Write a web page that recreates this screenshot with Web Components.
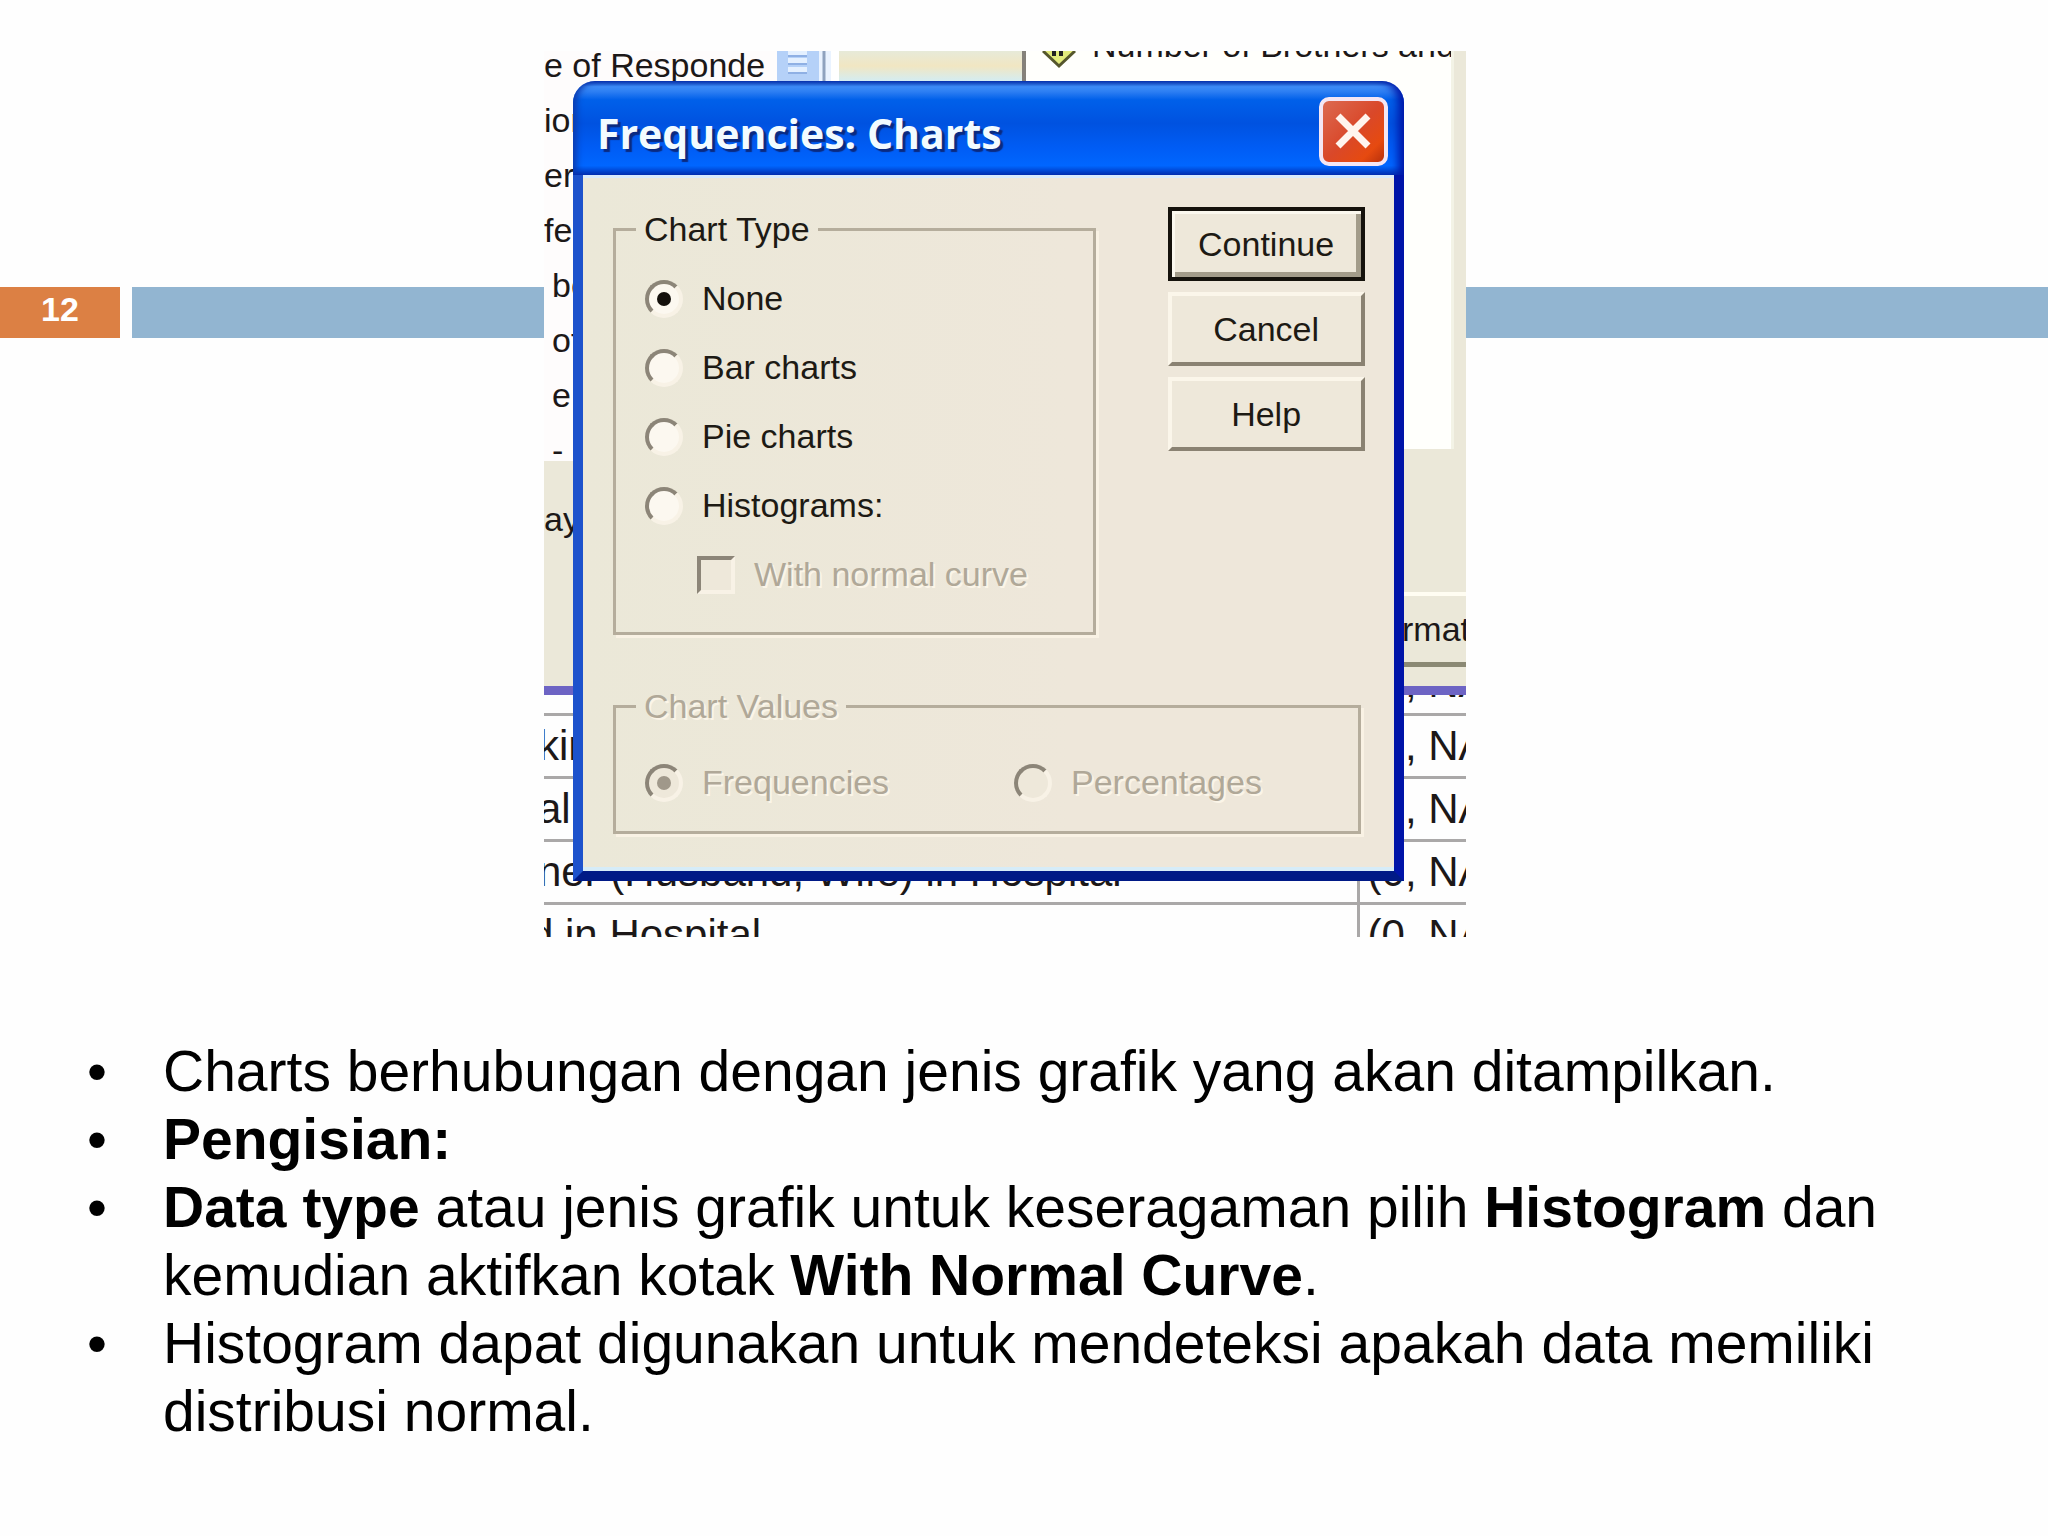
<!DOCTYPE html>
<html lang="id">
<head>
<meta charset="utf-8">
<title>Frequencies: Charts</title>
<style>
    body {
        margin: 0;
        background: #fefefe;
        color: #000;
        font-family: "Liberation Sans", Arial, sans-serif;
    }
</style>
</head>
<body>
<slide-page number="12">
    <slide-figure slot="figure">
        <backdrop-window slot="backdrop"></backdrop-window>
        <xp-dialog heading="Frequencies: Charts">
            <xp-group heading="Chart Type">
                <xp-option name="type" checked>None</xp-option>
                <xp-option name="type">Bar charts</xp-option>
                <xp-option name="type">Pie charts</xp-option>
                <xp-option name="type">Histograms:</xp-option>
                <xp-option type="checkbox" name="curve" nested disabled>With normal curve</xp-option>
            </xp-group>
            <xp-button slot="actions" default>Continue</xp-button>
            <xp-button slot="actions">Cancel</xp-button>
            <xp-button slot="actions">Help</xp-button>
            <xp-group slot="footer" heading="Chart Values" row disabled>
                <xp-option name="values" checked disabled>Frequencies</xp-option>
                <xp-option name="values" disabled>Percentages</xp-option>
            </xp-group>
        </xp-dialog>
    </slide-figure>
    <slide-point>Charts berhubungan dengan jenis grafik yang akan ditampilkan.</slide-point>
    <slide-point><b>Pengisian:</b></slide-point>
    <slide-point><b>Data type</b> atau jenis grafik untuk keseragaman pilih <b>Histogram</b> dan kemudian aktifkan kotak <b>With Normal Curve</b>.</slide-point>
    <slide-point>Histogram dapat digunakan untuk mendeteksi apakah data memiliki distribusi normal.</slide-point>
</slide-page>

<script>
class SlidePage extends HTMLElement {
    constructor() {
        super();
        this.attachShadow({ mode: 'open' });
        this.shadowRoot.innerHTML = `
            <style>
                :host {
                    display: block;
                }
                .stage {
                    display: grid;
                    grid-template-columns: 120px 1fr;
                    grid-template-rows: 287px 51px auto;
                    column-gap: 12px;
                }
                .number {
                    grid-area: 2 / 1;
                    background: #dc8044;
                    color: #fff;
                    font-size: 34px;
                    font-weight: bold;
                    line-height: 44px;
                    text-align: center;
                }
                .bar {
                    grid-area: 2 / 2;
                    background: #92b5d1;
                }
                ::slotted(slide-figure) {
                    grid-area: 1 / 1 / 4 / 3;
                    width: 45%;
                    margin: 51px 0 0 544px;
                }
                .points {
                    padding: 100px 80px 48px 87px;
                }
            </style>
            <div class="stage">
                <div class="number"></div>
                <div class="bar"></div>
                <slot name="figure"></slot>
            </div>
            <div class="points" role="list"><slot></slot></div>
        `;
    }
    connectedCallback() {
        this.shadowRoot.querySelector('.number').textContent = this.getAttribute('number');
    }
}

class SlidePoint extends HTMLElement {
    constructor() {
        super();
        this.attachShadow({ mode: 'open' });
        this.shadowRoot.innerHTML = `
            <style>
                :host {
                    display: grid;
                    grid-template-columns: 76px 1fr;
                    font-size: 57px;
                    line-height: 68px;
                }
            </style>
            <span>•</span>
            <div><slot></slot></div>
        `;
    }
    connectedCallback() {
        this.setAttribute('role', 'listitem');
    }
}

class SlideFigure extends HTMLElement {
    constructor() {
        super();
        this.attachShadow({ mode: 'open' });
        this.shadowRoot.innerHTML = `
            <style>
                :host {
                    display: grid;
                    grid-template-columns: minmax(0, 1fr);
                    overflow: hidden;
                }
                ::slotted(*) {
                    grid-area: 1 / 1;
                }
                ::slotted(xp-dialog) {
                    margin: 30px 62px 56px 29px;
                }
            </style>
            <slot name="backdrop"></slot>
            <slot></slot>
        `;
    }
}

// The window that shows behind the dialog, cut off at the figure's edges
class BackdropWindow extends HTMLElement {
    constructor() {
        super();
        this.attachShadow({ mode: 'open' });
        this.shadowRoot.innerHTML = `
            <style>
                :host {
                    display: flex;
                    flex-direction: column;
                    height: 0;
                    min-height: 100%;
                    overflow: hidden;
                    background: #fefefe;
                    color: #1c1818;
                    font-size: 34px;
                    white-space: nowrap;
                }
                .pane {
                    display: flex;
                    flex: none;
                    height: 635px;
                    background: #ebe8d9;
                }
                .pane svg {
                    flex: none;
                }
                .left {
                    flex: none;
                    width: 233px;
                }
                .names {
                    height: 410px;
                    overflow: hidden;
                    background: #fefcfc;
                    line-height: 55px;
                }
                .names ul {
                    list-style: none;
                    margin: -13px 0 0;
                    padding: 0;
                }
                .names .cut {
                    padding-left: 8px;
                }
                .label {
                    line-height: 116px;
                }
                .gap {
                    flex: none;
                    width: 183px;
                    height: 30px;
                    background: linear-gradient(#e7ead9, #f1e6c2 50%, #d4edf2);
                    border-left: 8px solid #fff;
                }
                .right {
                    display: flex;
                    flex: 1;
                    flex-direction: column;
                    min-width: 0;
                }
                .picked {
                    display: flex;
                    height: 398px;
                    margin-right: 12px;
                    overflow: hidden;
                    background: #fffffc;
                    border-left: 4px solid #85817a;
                    border-right: 3px solid #f3f3e6;
                }
                .picked svg {
                    margin: 0 16px;
                }
                .picked span {
                    height: 20px;
                    line-height: 0;
                    margin-top: -6px;
                }
                button {
                    margin-top: 143px;
                    padding: 0 0 0 380px;
                    height: 75px;
                    border: solid;
                    border-width: 4px 0 5px;
                    border-color: #fffdf2 #000 #8b8974;
                    background: #ebe8d9;
                    color: inherit;
                    font: inherit;
                    text-align: left;
                }
                .edge {
                    flex: none;
                    height: 9px;
                    background: #6d64c4;
                }
                .sheet {
                    flex: 1;
                    overflow: hidden;
                }
                table {
                    width: calc(100% + 14px);
                    table-layout: fixed;
                    margin: -42px 0 0 -14px;
                    border-spacing: 0;
                    font-size: 42px;
                    line-height: 58px;
                }
                td {
                    height: 60px;
                    padding: 0 0 0 8px;
                    border-bottom: 3px solid #aaa8a8;
                }
                td.flush {
                    padding-left: 0;
                }
                td + td {
                    width: 98px;
                    border-left: 3px solid #aaa8a8;
                }
            </style>
            <div class="pane">
                <div class="left">
                    <div class="names">
                        <ul>
                            <li>e of Responde</li>
                            <li>ion</li>
                            <li>er</li>
                            <li>fe</li>
                            <li class="cut">be</li>
                            <li class="cut">of</li>
                            <li class="cut">e:</li>
                            <li class="cut">-</li>
                        </ul>
                    </div>
                    <div class="label">ay</div>
                </div>
                <svg width="54" height="30" viewBox="0 0 54 30" aria-hidden="true">
                    <path fill="#b5d1f8" d="M0 0h42v30H0z"/>
                    <path stroke="#e4f0ff" stroke-width="6" d="M11 2h19M11 10h19M11 19h19"/>
                    <path stroke="#8fb0e4" stroke-width="2" d="M11 5h19M11 13h19M11 22h19"/>
                    <path fill="#eaf3ff" d="M42 0h12v30H42z"/>
                    <path stroke="#8fa2be" stroke-width="3" d="M47 0v30"/>
                </svg>
                <div class="gap"></div>
                <div class="right">
                    <div class="picked">
                        <svg width="34" height="18" viewBox="0 0 34 18" aria-hidden="true">
                            <path fill="#e2ea7c" stroke="#55562c" stroke-width="3" d="M1 0l16 15L33 0"/>
                            <path stroke="#222" stroke-width="4" d="M12 0v5M19 0v5"/>
                        </svg>
                        <span>Number of Brothers and</span>
                    </div>
                    <button type="button" tabindex="-1">rmat</button>
                </div>
            </div>
            <div class="edge"></div>
            <div class="sheet">
                <table>
                    <tr><td></td><td>(0, NA</td></tr>
                    <tr><td>kin</td><td>(0, NA</td></tr>
                    <tr><td>al</td><td>(0, NA</td></tr>
                    <tr><td>ner (Husband, Wife) in Hospital</td><td>(0, NA</td></tr>
                    <tr><td class="flush">d in Hospital</td><td>(0, NA</td></tr>
                </table>
            </div>
        `;
    }
}

class XpDialog extends HTMLElement {
    constructor() {
        super();
        this.attachShadow({ mode: 'open' });
        this.shadowRoot.innerHTML = `
            <style>
                :host {
                    display: block;
                    position: relative;
                    color: #1d1a14;
                    font-size: 34px;
                }
                header {
                    display: flex;
                    align-items: center;
                    justify-content: space-between;
                    box-sizing: border-box;
                    height: 94px;
                    padding: 6px 16px 0 24px;
                    border-radius: 22px 22px 0 0;
                    background: linear-gradient(#0c3fb0, #3f8ff8 6%, #2a7cf2 12%, #0060ea 20%, #0052e0 45%, #005cf4 70%, #0066ff 90%, #0038b8);
                    box-shadow: inset -8px 0 8px -2px #0018a8, inset 6px 0 6px -2px #0c3cb0;
                }
                h2 {
                    margin: 0;
                    padding-top: 4px;
                    color: #f2fbff;
                    font: bold 41px "Open Sans", "Noto Sans", sans-serif;
                    text-shadow: 3px 3px 1px #0a2a80;
                }
                .close {
                    display: grid;
                    place-items: center;
                    width: 69px;
                    height: 69px;
                    padding: 0;
                    border: 4px solid #f4e6f4;
                    border-radius: 10px;
                    background: linear-gradient(135deg, #dc6a52, #d9482a 50%, #e64a10 80%, #b8300c);
                }
                .body {
                    display: grid;
                    grid-template-columns: 1fr 197px;
                    column-gap: 72px;
                    align-content: start;
                    box-sizing: border-box;
                    height: 706px;
                    padding: 32px 29px 0 30px;
                    border: solid;
                    border-width: 0 10px 10px;
                    border-color: #000 #0014a8 #001a86 #1d52cc;
                    background: linear-gradient(90deg, #ebe8d8, #eee7da 60%);
                    box-shadow: inset 0 3px #d8eafc, inset 0 -4px #d6ecf8;
                }
                .actions {
                    display: flex;
                    flex-direction: column;
                    gap: 11px;
                }
                .footer {
                    grid-column: 1 / 3;
                    margin: 49px 4px 0 0;
                }
            </style>
            <header>
                <h2></h2>
                <button class="close" type="button" aria-label="Close">
                    <svg width="36" height="36" viewBox="0 0 36 36" aria-hidden="true">
                        <path stroke="#fff4ee" stroke-width="7" d="M3 3l30 30M33 3L3 33"/>
                    </svg>
                </button>
            </header>
            <div class="body">
                <slot></slot>
                <div class="actions"><slot name="actions"></slot></div>
                <div class="footer"><slot name="footer"></slot></div>
            </div>
        `;
    }
    connectedCallback() {
        this.shadowRoot.querySelector('h2').textContent = this.getAttribute('heading');
    }
}

class XpGroup extends HTMLElement {
    constructor() {
        super();
        this.attachShadow({ mode: 'open' });
        this.shadowRoot.innerHTML = `
            <style>
                :host {
                    display: block;
                }
                fieldset {
                    min-width: 0;
                    margin: 0;
                    padding: 13px 28px 23px 29px;
                    border: 3px solid #b5ad9c;
                    box-shadow: 3px 3px #f9f2e4;
                }
                legend {
                    padding: 0 8px;
                    margin-left: -9px;
                    line-height: 44px;
                }
                .options {
                    display: grid;
                }
                :host([row]) .options {
                    grid-template-columns: 369px 1fr;
                }
                :host([row]) fieldset {
                    padding-top: 20px;
                    padding-bottom: 14px;
                }
                :host([disabled]) legend {
                    color: #b0a898;
                    text-shadow: 2px 2px #fbf5e8;
                }
            </style>
            <fieldset>
                <legend></legend>
                <div class="options"><slot></slot></div>
            </fieldset>
        `;
    }
    connectedCallback() {
        this.shadowRoot.querySelector('legend').textContent = this.getAttribute('heading');
    }
}

class XpOption extends HTMLElement {
    constructor() {
        super();
        this.attachShadow({ mode: 'open' });
        this.shadowRoot.innerHTML = `
            <style>
                :host {
                    display: block;
                }
                :host([nested]) {
                    margin-left: 52px;
                }
                label {
                    display: flex;
                    align-items: center;
                    gap: 19px;
                    height: 69px;
                }
                input {
                    appearance: none;
                    display: grid;
                    place-items: center;
                    flex: none;
                    box-sizing: border-box;
                    width: 38px;
                    height: 38px;
                    margin: 0;
                    border: 4px solid;
                    border-color: #8c8578 #f8f2e6 #f8f2e6 #8c8578;
                    background: #fcf8f0;
                }
                input[type=radio] {
                    border-radius: 50%;
                }
                input[type=radio]:checked::before {
                    content: "";
                    width: 14px;
                    height: 14px;
                    border-radius: 50%;
                    background: #14100c;
                }
                input:disabled {
                    background: #eee8da;
                }
                input[type=radio]:disabled::before {
                    background: #a0988a;
                }
                :host([disabled]) label {
                    color: #b0a898;
                    text-shadow: 2px 2px #fbf5e8;
                }
            </style>
            <label><input type="radio"><span><slot></slot></span></label>
        `;
        this._input = this.shadowRoot.querySelector('input');
        this._input.addEventListener('change', this._clearOthers.bind(this));
    }
    connectedCallback() {
        this._input.type = this.getAttribute('type') || 'radio';
        this._input.name = this.getAttribute('name');
        this._input.checked = this.hasAttribute('checked');
        this._input.disabled = this.hasAttribute('disabled');
    }

    // radios in separate shadow roots do not share a group by themselves
    _clearOthers() {
        if (this._input.type !== 'radio') return;
        this.parentElement.querySelectorAll('xp-option').forEach(option => {
            if (option !== this && option._input.name === this._input.name) {
                option._input.checked = false;
            }
        });
    }
}

class XpButton extends HTMLElement {
    constructor() {
        super();
        this.attachShadow({ mode: 'open' });
        this.shadowRoot.innerHTML = `
            <style>
                :host {
                    display: block;
                }
                button {
                    display: block;
                    width: 100%;
                    height: 74px;
                    padding: 0;
                    border: 4px solid;
                    border-color: #fbf6ea #8a8272 #8a8272 #fbf6ea;
                    background: #eee8da;
                    color: inherit;
                    font: inherit;
                }
                :host([default]) button {
                    border-color: #15120c;
                    box-shadow: inset 3px 3px #fbf8ee, inset -5px -5px #a39c8a;
                }
            </style>
            <button type="button"><slot></slot></button>
        `;
    }
}

customElements.define('slide-page', SlidePage);
customElements.define('slide-point', SlidePoint);
customElements.define('slide-figure', SlideFigure);
customElements.define('backdrop-window', BackdropWindow);
customElements.define('xp-dialog', XpDialog);
customElements.define('xp-group', XpGroup);
customElements.define('xp-option', XpOption);
customElements.define('xp-button', XpButton);
</script>
</body>
</html>
